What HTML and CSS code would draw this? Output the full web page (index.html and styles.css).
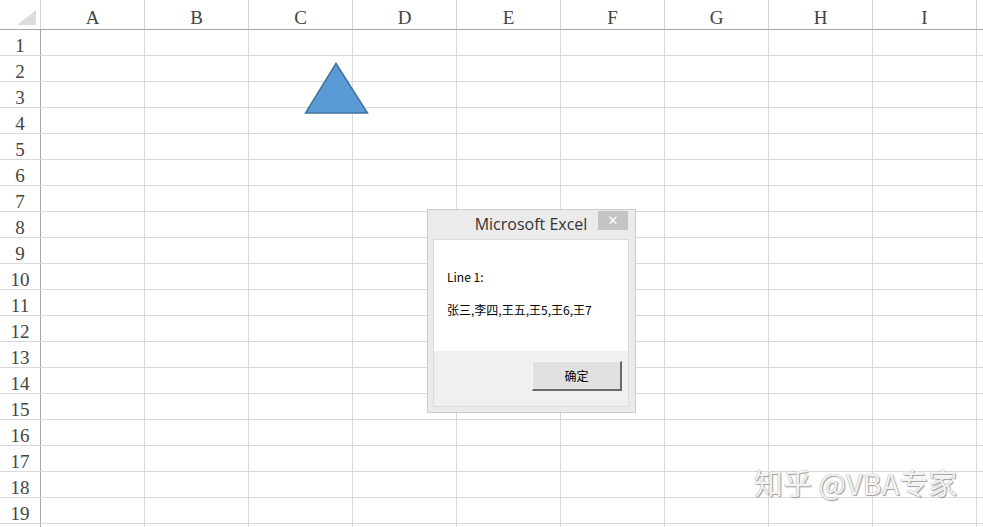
FILE: index.html
```html
<!DOCTYPE html>
<html lang="zh-CN">
<head>
<meta charset="utf-8">
<title>Microsoft Excel</title>
<link rel="stylesheet" href="styles.css">
</head>
<body>
<div class="sheet">
  <div class="head">
    <div class="corner"><svg class="corner-tri" width="20" height="16" viewBox="0 0 20 16"><polygon points="19,0 19,15 0,15" fill="#dcdcdc"/></svg></div>
    <div class="col">A</div><div class="col">B</div><div class="col">C</div><div class="col">D</div><div class="col">E</div><div class="col">F</div><div class="col">G</div><div class="col">H</div><div class="col">I</div>
    <div class="col-rest"></div>
  </div>
  <div class="row"><div class="rn">1</div><div class="cells"></div></div>
  <div class="row"><div class="rn">2</div><div class="cells"></div></div>
  <div class="row"><div class="rn">3</div><div class="cells"></div></div>
  <div class="row"><div class="rn">4</div><div class="cells"></div></div>
  <div class="row"><div class="rn">5</div><div class="cells"></div></div>
  <div class="row"><div class="rn">6</div><div class="cells"></div></div>
  <div class="row"><div class="rn">7</div><div class="cells"></div></div>
  <div class="row"><div class="rn">8</div><div class="cells"></div></div>
  <div class="row"><div class="rn">9</div><div class="cells"></div></div>
  <div class="row"><div class="rn">10</div><div class="cells"></div></div>
  <div class="row"><div class="rn">11</div><div class="cells"></div></div>
  <div class="row"><div class="rn">12</div><div class="cells"></div></div>
  <div class="row"><div class="rn">13</div><div class="cells"></div></div>
  <div class="row"><div class="rn">14</div><div class="cells"></div></div>
  <div class="row"><div class="rn">15</div><div class="cells"></div></div>
  <div class="row"><div class="rn">16</div><div class="cells"></div></div>
  <div class="row"><div class="rn">17</div><div class="cells"></div></div>
  <div class="row"><div class="rn">18</div><div class="cells"></div></div>
  <div class="row"><div class="rn">19</div><div class="cells"></div></div>
  <div class="row"><div class="rn"></div><div class="cells"></div></div>
</div>

<svg class="shape" width="66" height="54" viewBox="0 0 66 54">
  <polygon points="32,1.5 63.5,51 1.5,51" fill="#5b9bd5" stroke="#41719c" stroke-width="1.5" stroke-linejoin="miter"/>
</svg>

<div class="dialog">
  <div class="dlg-title">Microsoft Excel</div>
  <div class="dlg-close">✕</div>
  <div class="dlg-body">
    <div class="dlg-msg">
      <p class="msg-line">Line 1:</p>
      <p class="msg-line msg-second">张三,李四,王五,王5,王6,王7</p>
    </div>
    <div class="dlg-foot">
      <button class="btn">确定</button>
    </div>
  </div>
</div>

<div class="watermark">知乎 @VBA专家</div>
</body>
</html>
```

FILE: styles.css
```css
html, body {
  margin: 0;
  padding: 0;
  width: 983px;
  height: 527px;
  overflow: hidden;
  background: #ffffff;
}

.sheet {
  display: flex;
  flex-direction: column;
  width: 983px;
  font-family: "Liberation Serif", serif;
  font-size: 19px;
  color: #444444;
}

.head {
  display: flex;
  height: 30px;
  box-sizing: border-box;
  border-bottom: 1px solid #a6a6a6;
}

.corner {
  width: 41px;
  flex: none;
  box-sizing: border-box;
  border-right: 1px solid #d4d4d4;
  display: flex;
  align-items: flex-end;
  justify-content: flex-end;
  padding: 0 3px 3px 0;
}

.corner-tri {
  display: block;
}

.col {
  width: 104px;
  flex: none;
  box-sizing: border-box;
  border-right: 1px solid #d4d4d4;
  text-align: center;
  line-height: 19px;
  padding-top: 8px;
}

.col-rest {
  flex: 1;
}

.row {
  display: flex;
  height: 26px;
  box-sizing: border-box;
  border-bottom: 1px solid #d9d9d9;
}

.rn {
  width: 41px;
  flex: none;
  box-sizing: border-box;
  border-right: 1px solid #a6a6a6;
  text-align: center;
  line-height: 19px;
  padding-top: 6px;
}

.cells {
  flex: 1;
  background-image: repeating-linear-gradient(to right, transparent 0, transparent 103px, #d9d9d9 103px, #d9d9d9 104px);
}

.shape {
  position: absolute;
  left: 304px;
  top: 62px;
}

.dialog {
  position: absolute;
  left: 427px;
  top: 209px;
  width: 209px;
  height: 204px;
  box-sizing: border-box;
  border: 1px solid #cccccc;
  background: #ebebeb;
  display: flex;
  flex-direction: column;
  padding: 0 6px 5px 5px;
  font-family: "Noto Sans CJK SC", sans-serif;
}

.dlg-title {
  height: 29px;
  flex: none;
  font-family: "Open Sans", "Noto Sans", sans-serif;
  font-size: 16px;
  color: #333333;
  text-align: center;
  line-height: 29px;
}

.dlg-close {
  position: absolute;
  top: 1px;
  right: 7px;
  width: 30px;
  height: 19px;
  background: #c4c4c4;
  color: #ffffff;
  font-family: "DejaVu Sans", sans-serif;
  font-size: 13px;
  font-weight: bold;
  line-height: 19px;
  text-align: center;
}

.dlg-body {
  flex: 1;
  display: flex;
  flex-direction: column;
  border: 1px solid #dcdcdc;
  background: #f0f0f0;
}

.dlg-msg {
  height: 111px;
  background: #ffffff;
  padding: 29px 13px 0 13px;
  box-sizing: border-box;
}

.msg-line {
  margin: 0;
  font-size: 12px;
  line-height: 16px;
  color: #000000;
}

.msg-second {
  margin-top: 17px;
}

.dlg-foot {
  flex: 1;
  display: flex;
  justify-content: flex-end;
  align-items: flex-start;
  padding: 10px 6px 0 0;
}

.btn {
  width: 90px;
  height: 30px;
  box-sizing: border-box;
  margin: 0;
  padding: 0;
  background: #e1e1e1;
  border-style: solid;
  border-width: 1px 2px 2px 1px;
  border-color: #f8f8f8 #6a6a6a #6a6a6a #f8f8f8;
  font-family: "Noto Sans CJK SC", sans-serif;
  font-size: 12px;
  color: #000000;
}

.watermark {
  position: absolute;
  left: 754px;
  top: 462px;
  font-family: "Noto Sans CJK SC", sans-serif;
  font-size: 29px;
  line-height: 40px;
  color: #f2f2f2;
  text-shadow: 0 0 1px #8a8a8a, 1px 1px 1px #a0a0a0;
  white-space: nowrap;
}
```
